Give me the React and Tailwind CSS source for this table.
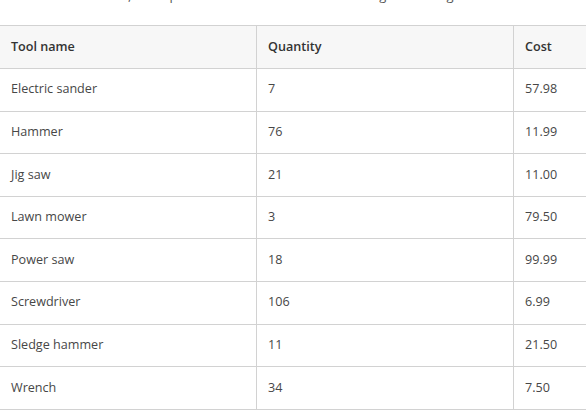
import React from "react";

const tools = [
  { name: "Electric sander", qty: "7", cost: "57.98" },
  { name: "Hammer", qty: "76", cost: "11.99" },
  { name: "Jig saw", qty: "21", cost: "11.00" },
  { name: "Lawn mower", qty: "3", cost: "79.50" },
  { name: "Power saw", qty: "18", cost: "99.99" },
  { name: "Screwdriver", qty: "106", cost: "6.99" },
  { name: "Sledge hammer", qty: "11", cost: "21.50" },
  { name: "Wrench", qty: "34", cost: "7.50" },
];

export default function App() {
  return (
    <div
      className="w-[586px] h-[418px] overflow-hidden bg-white text-[12.6px] text-[#474747]"
      style={{ fontFamily: '"Open Sans", "Liberation Sans", sans-serif' }}
    >
      {/* tail end of the paragraph above, only descenders show */}
      <div className="h-[4px] overflow-hidden">
        <div className="flex -mt-[14px] leading-[18px] text-[13px] text-[#555]">
          <span className="w-[128px] shrink-0" />
          <span>,</span>
          <span className="w-[38px] shrink-0" />
          <span>p</span>
          <span className="w-[202px] shrink-0" />
          <span>g</span>
          <span className="w-[60px] shrink-0" />
          <span>g</span>
        </div>
      </div>

      <table className="mt-[21px] -ml-px w-[771px] border-collapse table-fixed">
        <colgroup>
          <col className="w-[257px]" />
          <col className="w-[257px]" />
          <col className="w-[257px]" />
        </colgroup>
        <thead>
          <tr className="h-[43px] bg-[#f7f7f7]">
            <th className="border border-[#d2d2d2] px-[11px] text-left font-semibold text-[#333]">
              Tool name
            </th>
            <th className="border border-[#d2d2d2] px-[11px] text-left font-semibold text-[#333]">
              Quantity
            </th>
            <th className="border border-[#d2d2d2] px-[11px] text-left font-semibold text-[#333]">
              Cost
            </th>
          </tr>
        </thead>
        <tbody>
          {tools.map((t) => (
            <tr key={t.name} className="h-[42.6px]">
              <td className="border border-[#d2d2d2] px-[11px]">{t.name}</td>
              <td className="border border-[#d2d2d2] px-[11px]">{t.qty}</td>
              <td className="border border-[#d2d2d2] px-[11px]">{t.cost}</td>
            </tr>
          ))}
        </tbody>
      </table>
    </div>
  );
}
